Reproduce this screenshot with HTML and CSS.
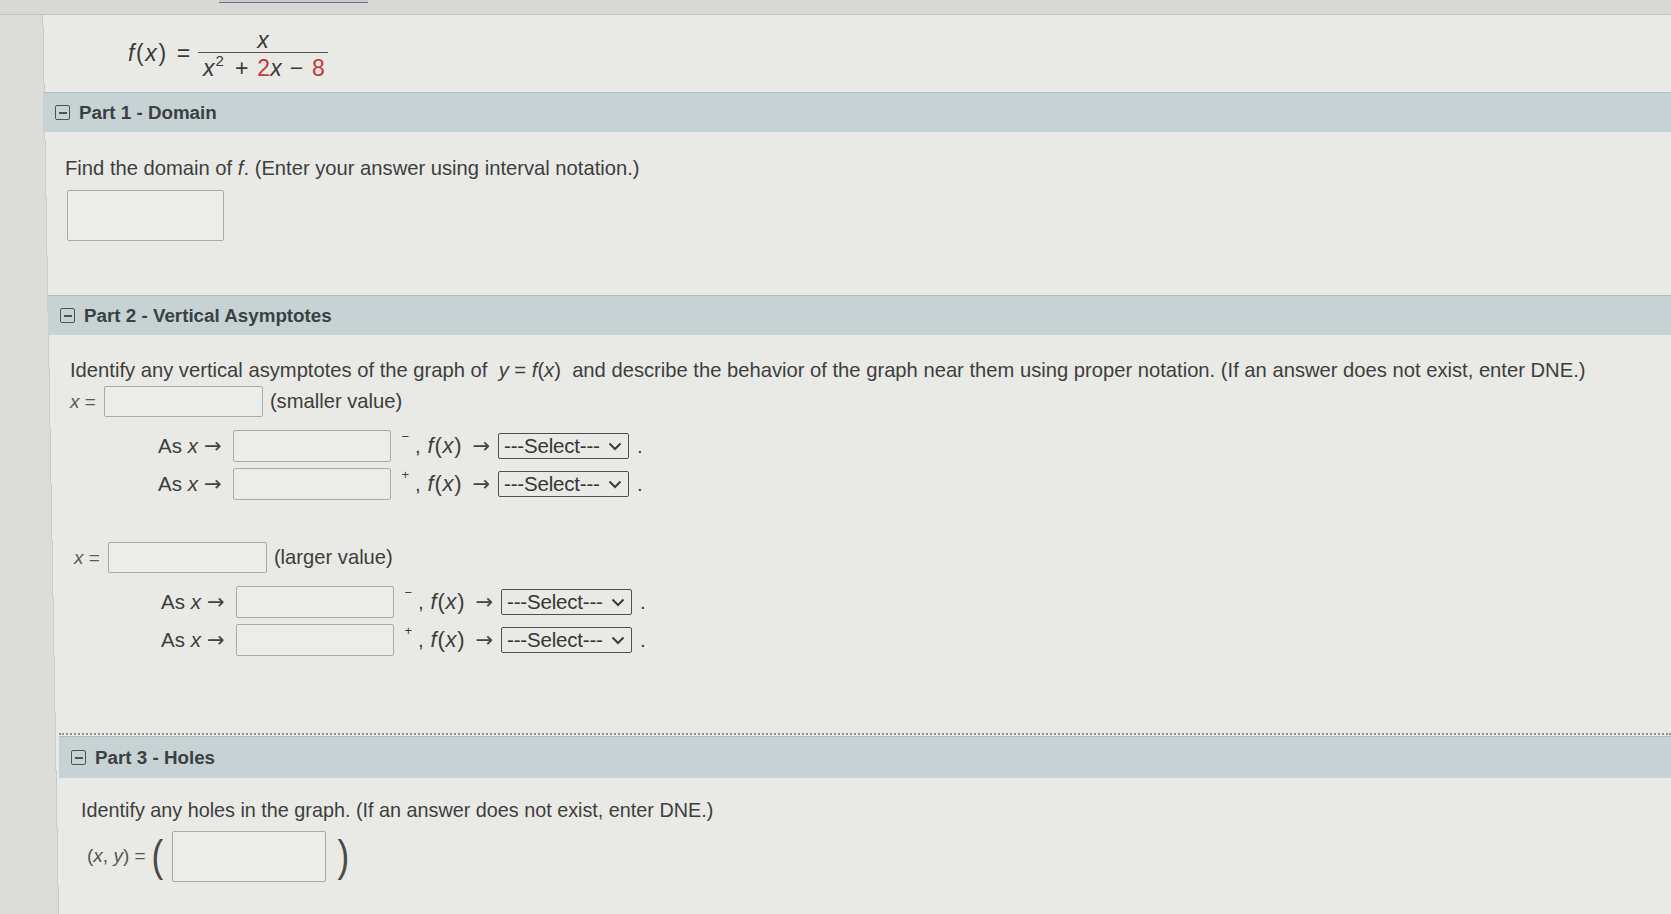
FILE: index.html
```html
<!DOCTYPE html>
<html>
<head>
<meta charset="utf-8">
<link rel="stylesheet" href="styles.css">
</head>
<body>
<div class="topbar"><div class="tab"></div></div>
<div class="page">
  <main class="content">
    <div class="formula">
      <span class="fx"><i>f</i>(<i>x</i>)</span>
      <span class="eq">=</span>
      <span class="frac">
        <span class="num"><i>x</i></span>
        <span class="den"><i>x</i><sup>2</sup><span class="op">+</span><span class="red">2</span><i>x</i><span class="op minus">−</span><span class="red">8</span></span>
      </span>
    </div>

    <section class="part part1">
      <div class="part-head"><span class="toggle"></span>Part 1 - Domain</div>
      <div class="part-body body1">
        <p class="q">Find the domain of <i>f</i>. (Enter your answer using interval notation.)</p>
        <div class="box box-lg"></div>
      </div>
    </section>

    <section class="part part2">
      <div class="part-head"><span class="toggle"></span>Part 2 - Vertical Asymptotes</div>
      <div class="part-body body2">
        <p class="q">Identify any vertical asymptotes of the graph of &nbsp;<i>y</i> = <i>f</i>(<i>x</i>)&nbsp; and describe the behavior of the graph near them using proper notation. (If an answer does not exist, enter DNE.)</p>
        <div class="xrow first"><span class="xeq"><i>x</i> =</span><div class="box box-sm"></div><span class="note">(smaller value)</span></div>
        <div class="asrow r1"><span class="as">As <i>x</i><span class="arr">→</span></span><div class="box box-sm"></div><sup class="side">−</sup><span class="fxa">, <span class="m"><i>f</i>(<i>x</i>)</span><span class="arr">→</span></span><div class="sel"><span>---Select---</span><svg width="14" height="9" viewBox="0 0 14 9"><path d="M1.5 1.5 L7 7 L12.5 1.5" fill="none" stroke="#3c3c3c" stroke-width="2"/></svg></div><span class="dot">.</span></div>
        <div class="asrow r2"><span class="as">As <i>x</i><span class="arr">→</span></span><div class="box box-sm"></div><sup class="side">+</sup><span class="fxa">, <span class="m"><i>f</i>(<i>x</i>)</span><span class="arr">→</span></span><div class="sel"><span>---Select---</span><svg width="14" height="9" viewBox="0 0 14 9"><path d="M1.5 1.5 L7 7 L12.5 1.5" fill="none" stroke="#3c3c3c" stroke-width="2"/></svg></div><span class="dot">.</span></div>
        <div class="xrow second"><span class="xeq"><i>x</i> =</span><div class="box box-sm"></div><span class="note">(larger value)</span></div>
        <div class="asrow r1 shift"><span class="as">As <i>x</i><span class="arr">→</span></span><div class="box box-sm"></div><sup class="side">−</sup><span class="fxa">, <span class="m"><i>f</i>(<i>x</i>)</span><span class="arr">→</span></span><div class="sel"><span>---Select---</span><svg width="14" height="9" viewBox="0 0 14 9"><path d="M1.5 1.5 L7 7 L12.5 1.5" fill="none" stroke="#3c3c3c" stroke-width="2"/></svg></div><span class="dot">.</span></div>
        <div class="asrow r2 shift"><span class="as">As <i>x</i><span class="arr">→</span></span><div class="box box-sm"></div><sup class="side">+</sup><span class="fxa">, <span class="m"><i>f</i>(<i>x</i>)</span><span class="arr">→</span></span><div class="sel"><span>---Select---</span><svg width="14" height="9" viewBox="0 0 14 9"><path d="M1.5 1.5 L7 7 L12.5 1.5" fill="none" stroke="#3c3c3c" stroke-width="2"/></svg></div><span class="dot">.</span></div>
      </div>
    </section>

    <section class="part part3">
      <div class="part-head"><span class="toggle"></span>Part 3 - Holes</div>
      <div class="part-body body3">
        <p class="q">Identify any holes in the graph. (If an answer does not exist, enter DNE.)</p>
        <div class="xyrow"><span class="xy">(<i>x</i>, <i>y</i>) =</span><span class="paren">(</span><div class="box box-hole"></div><span class="paren">)</span></div>
      </div>
    </section>
  </main>
</div>
</body>
</html>
```

FILE: styles.css
```css
html, body {
  margin: 0;
  padding: 0;
}
body {
  width: 1671px;
  height: 914px;
  overflow: hidden;
  background: #e9e9e5;
  font-family: "Liberation Sans", Arial, sans-serif;
  color: #3d3d3d;
}
.topbar {
  height: 14px;
  background: #d8d8d4;
  border-bottom: 1px solid #c4c4c0;
}
.tab {
  margin-left: 219px;
  width: 149px;
  height: 2px;
  background: #c5ccd3;
  border-bottom: 1px solid #6d7278;
}
.page {
  height: 899px;
  padding-left: 43px;
  box-sizing: border-box;
  background: linear-gradient(89deg, #dcdcd8 58px, #cbcbc7 58px, #cbcbc7 59px, #e9e9e5 59px);
}
.content {
  min-width: 0;
}
.formula {
  height: 77px;
  display: flex;
  align-items: center;
  padding-left: 85px;
  font-size: 23px;
  color: #3a3a3a;
}
.fx { letter-spacing: 1.6px; }
.eq { margin: 0 8px 0 9px; }
.frac {
  display: inline-flex;
  flex-direction: column;
  align-items: center;
  margin-top: 3px;
}
.num {
  line-height: 24px;
}
.den {
  border-top: 1px solid #555;
  line-height: 30px;
  padding: 0 3px 0 5px;
}
.den sup {
  font-size: 15px;
  vertical-align: 10px;
  line-height: 0;
  margin-left: 1px;
}
.op { margin: 0 9px 0 11px; }
.op.minus { margin: 0 9px 0 8px; }
.red { color: #c8383a; }

.part-head {
  height: 39px;
  background: #c6d2d3;
  border-top: 1px solid #b2bfc0;
  display: flex;
  align-items: center;
  padding-left: 12px;
  font-weight: bold;
  font-size: 18.8px;
  color: #3b4143;
}
.toggle {
  width: 13px;
  height: 13px;
  border: 1.5px solid #4e5254;
  border-radius: 2px;
  margin-right: 9px;
  display: flex;
  align-items: center;
  justify-content: center;
  flex: none;
}
.toggle::after {
  content: "";
  width: 8px;
  height: 2px;
  background: #4e5254;
}
.part-body {
  padding-left: 22px;
}
.q {
  margin: 0;
  font-size: 20.2px;
  line-height: 24px;
  color: #3e3e3e;
}
.box {
  border: 1px solid #a9a9a6;
  border-radius: 2px;
  background: #ececea;
  box-sizing: border-box;
  flex: none;
}
.box-lg {
  width: 157px;
  height: 51px;
  margin-top: 10px;
  margin-left: 2px;
}
.box-sm {
  width: 159px;
  height: 31px;
}
.box-hole {
  width: 154px;
  height: 51px;
}
.body1 {
  padding-top: 24px;
  padding-bottom: 54px;
}
.part2 { margin-left: 5px; }
.body2 {
  padding-top: 23px;
  padding-bottom: 77px;
}
.xrow {
  display: flex;
  align-items: center;
  font-size: 20.2px;
}
.xrow.first { margin-top: 4px; }
.xrow.second { margin-top: 42px; margin-left: 4px; }
.xeq {
  color: #5a5a5a;
  font-size: 19px;
  margin-right: 8px;
}
.note { margin-left: 7px; }
.asrow {
  display: flex;
  align-items: center;
  font-size: 20.5px;
  padding-left: 88px;
}
.asrow.shift { padding-left: 91px; }
.asrow.r1 { margin-top: 13px; }
.asrow.r2 { margin-top: 6px; }
.asrow .box-sm { margin-left: 12px; height: 32px; width: 158px; }
.arr {
  font-family: "DejaVu Sans", sans-serif;
  font-size: 21px;
  margin-left: 6px;
  color: #444;
}
.side {
  font-size: 13px;
  align-self: flex-start;
  margin: 0 0 0 10px;
  line-height: 14px;
}
.fxa { margin-right: 8px; margin-left: 6px; }
.m { font-size: 22px; letter-spacing: 0.8px; margin-left: 1px; }
.fxa .arr { margin-left: 10px; }
.sel {
  width: 131px;
  height: 26px;
  box-sizing: border-box;
  border: 1px solid #4f4f4f;
  border-radius: 2px;
  display: flex;
  align-items: center;
  justify-content: space-between;
  padding: 0 6px 0 5px;
  font-size: 20.5px;
  letter-spacing: -0.2px;
  color: #363636;
  flex: none;
  overflow: hidden;
}
.dot { margin-left: 8px; }
.part3 {
  margin-left: 16px;
  margin-top: 0;
  border-top: 2px dotted #8c8c8c;
  padding-top: 1px;
}
.part3 .part-head {
  height: 41px;
}
.body3 {
  padding-top: 20px;
}
.body3 .q { font-size: 19.8px; }
.xyrow {
  display: flex;
  align-items: center;
  margin-top: 8px;
  padding-left: 6px;
}
.xy {
  font-size: 19px;
  color: #555;
  margin-right: 4px;
}
.paren {
  font-size: 44px;
  color: #4a4a4a;
  line-height: 52px;
  transform: scaleX(0.8);
}
.paren + .box { margin-left: 8px; }
.box + .paren { margin-left: 10px; }
```
